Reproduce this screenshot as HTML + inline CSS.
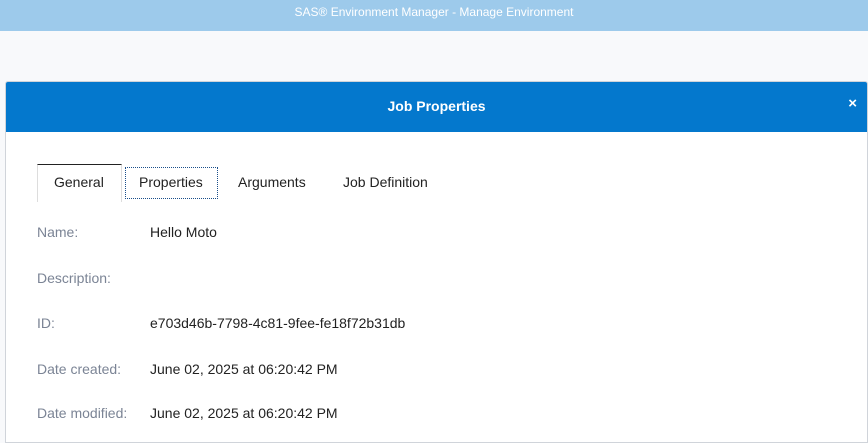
<!DOCTYPE html>
<html><head><style>
body{margin:0;width:868px;height:427px;overflow:hidden;background:#f8f9fb;font-family:"Liberation Sans",sans-serif;position:relative}
.top{position:absolute;left:0;top:0;width:868px;height:31px;background:#9dcaeb;color:#fff;font-size:12px;text-align:center;line-height:24px}
.dlg{position:absolute;left:5px;top:81px;width:861px;height:360px;background:#fff;border:1px solid #d0d4da;border-radius:3px 3px 0 0;overflow:hidden}
.hd{height:50px;background:#0478cd;color:#fff;font-weight:bold;font-size:14px;text-align:center;line-height:48px;position:relative}
.x{position:absolute;right:10px;top:-2px;font-size:15px;font-weight:bold}
.tab{position:absolute;font-size:14px;color:#222}
.lbl{position:absolute;left:31px;font-size:14px;color:#7b8495}
.val{position:absolute;left:144px;font-size:14px;color:#222}
</style></head><body>
<div class="top">SAS® Environment Manager - Manage Environment</div>
<div class="dlg">
<div class="hd">Job Properties<span class="x">×</span></div>
<div style="position:absolute;left:31px;top:82px;width:83px;height:37px;border-top:1px solid #222;border-left:1px solid #ddd;border-right:1px solid #ddd"></div>
<div class="tab" style="left:48px;top:92px">General</div>
<div style="position:absolute;left:119px;top:85px;width:91px;height:30px;border:1px dotted #1a4e8a"></div>
<div class="tab" style="left:133px;top:92px">Properties</div>
<div class="tab" style="left:232px;top:92px">Arguments</div>
<div class="tab" style="left:337px;top:92px">Job Definition</div>
<div class="lbl" style="top:142px">Name:</div><div class="val" style="top:142px">Hello Moto</div>
<div class="lbl" style="top:188px">Description:</div>
<div class="lbl" style="top:233px">ID:</div><div class="val" style="top:233px">e703d46b-7798-4c81-9fee-fe18f72b31db</div>
<div class="lbl" style="top:279px">Date created:</div><div class="val" style="top:279px">June 02, 2025 at 06:20:42 PM</div>
<div class="lbl" style="top:323px">Date modified:</div><div class="val" style="top:323px">June 02, 2025 at 06:20:42 PM</div>
</div>
</body></html>
